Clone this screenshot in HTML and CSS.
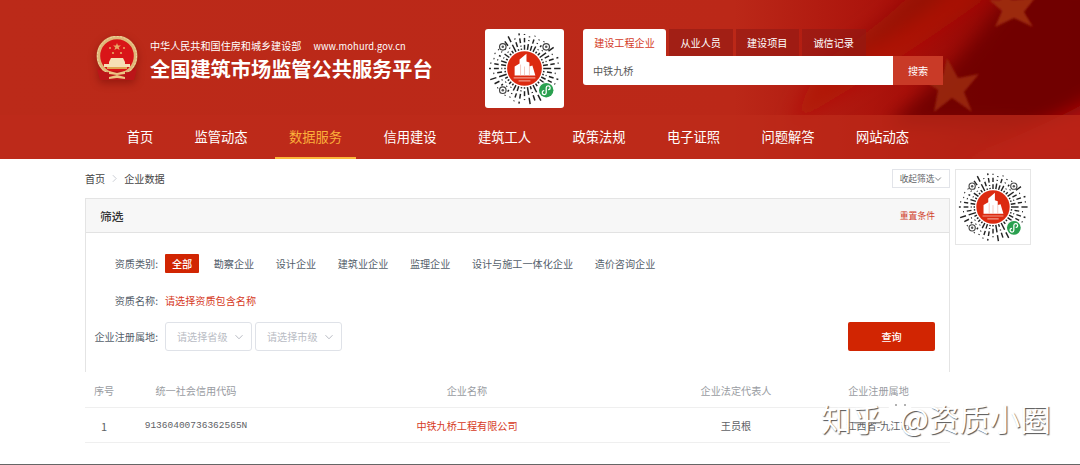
FILE: index.html
```
<!DOCTYPE html>
<html lang="zh-CN">
<head>
  <meta charset="UTF-8">
  <meta name="viewport" content="width=device-width, initial-scale=1.0">
  <title>全国建筑市场监管公共服务平台</title>
  <link rel="stylesheet" href="styles.css">
</head>
<body>
  <svg width="0" height="0" class="defs">
    <symbol id="qr" viewBox="0 0 76 76">
      <g id="rays" stroke="#222"></g>
      <g fill="#fff" stroke="#444" stroke-width="1.2">
        <circle cx="16" cy="16" r="3.3"/><circle cx="60" cy="16" r="3.3"/><circle cx="16" cy="60" r="3.3"/>
      </g>
      <g fill="#555"><circle cx="16" cy="16" r="1.3"/><circle cx="60" cy="16" r="1.3"/><circle cx="16" cy="60" r="1.3"/></g>
      <circle cx="38" cy="38" r="17.6" fill="#dc2a10"/>
      <path d="M28 45v-9l5-3v-4l7-6v8l3 1v4l3-1 3 10z" fill="#fff"/>
      <path d="M34 45v-11M38 45v-9M43 45v-9" stroke="#efb0a4" stroke-width=".7"/>
      <path d="M27 47.5h22M32 50.5h12" stroke="#f09a8a" stroke-width="1.2"/>
      <circle cx="60" cy="60" r="8.4" fill="#fff"/>
      <circle cx="60" cy="60" r="7.3" fill="#2aa04f"/>
      <path d="M57.500 60.500a2 2 0 1 0 2.500 2v-5a2 2 0 1 1 2.500 2" fill="none" stroke="#fff" stroke-width="1.3" stroke-linecap="round"/>
    </symbol>
    <symbol id="down" viewBox="0 0 10 10">
      <path d="M1.5 3.2L5 6.8l3.500-3.600" fill="none" stroke="currentColor" stroke-width="1"/>
    </symbol>
  </svg>

  <header class="header">
    <svg class="flag" viewBox="0 0 1080 159" preserveAspectRatio="none">
      <defs>
        <linearGradient id="base" x1="0" x2="1" y1="0" y2="0">
          <stop offset="0" stop-color="#bb2a19"/>
          <stop offset=".68" stop-color="#bb2818"/>
          <stop offset=".84" stop-color="#a80f09"/>
          <stop offset="1" stop-color="#7c0100"/>
        </linearGradient>
        <filter id="soft" x="-30%" y="-30%" width="160%" height="160%"><feGaussianBlur stdDeviation="9"/></filter>
        <filter id="edge"><feGaussianBlur stdDeviation=".8"/></filter>
      </defs>
      <rect width="1080" height="159" fill="url(#base)"/>
      <g filter="url(#soft)">
        <path d="M815 65Q870 35 920-15h35Q910 35 850 62z" fill="#8a0c07" opacity=".6"/>
        <path d="M790 125Q900 62 1005-15h-50Q910 35 820 65z" fill="#b00c08" opacity=".6"/>
        <path d="M890 122Q965 60 1020-20h100V125H890z" fill="#700000" opacity=".95"/>
        <path d="M940 165Q1030 135 1100 95V170z" fill="#cc1610" opacity=".65"/>
      </g>
      <g fill="#9c2a10" filter="url(#edge)">
        <path d="M947 58l11 20 21-4-15 18 8 20-20-14-18 14 4-22-17-11 22-4z" opacity=".85"/>
        <path d="M1003-15l8 15 24-2-11 14 9 15-19-9-19 9 7-16-13-11h12z"/>
      </g>
    </svg>

    <div class="top">
      <svg class="emblem" viewBox="0 0 42 44">
        <path d="M3 32l10 1h16l10-1-2 11H5z" fill="#b80f13"/>
        <circle cx="21" cy="20" r="18.6" fill="#d91518" stroke="#dfb778" stroke-width="3.6"/>
        <circle cx="21" cy="20" r="19.5" fill="none" stroke="#f0d9a3" stroke-width="1" stroke-dasharray="2 1.5"/>
        <path d="M21 7l1 2.500h3l-2.300 1.800.9 2.700-2.600-1.600-2.600 1.600.9-2.700L17 9.500h3z" fill="#e8a765"/>
        <g fill="#e8a765"><circle cx="14" cy="12" r="1"/><circle cx="28" cy="12" r="1"/><circle cx="17" cy="17" r="1.1"/><circle cx="25" cy="17" r="1.1"/></g>
        <path d="M15 22h12l2 4v2h5v3H8v-3h5v-2z" fill="#f6dfb5"/>
        <path d="M11 31h20v2H11z" fill="#e0a553"/>
        <path d="M1 33q10 5 16 2h8q8 3 16-2l-3 11H4z" fill="#bb1519"/>
        <path d="M13 35l8 2 8-2v3l-8 1-8-1zM13 41l8-2 8 2v2l-8-1-8 1z" fill="#edc583"/>
      </svg>
      <div class="brand">
        <p class="ministry">中华人民共和国住房和城乡建设部<span class="url">www.mohurd.gov.cn</span></p>
        <h1>全国建筑市场监管公共服务平台</h1>
      </div>
      <div class="qr-card"><svg><use href="#qr"/></svg></div>
      <div class="search">
        <div class="tabs">
          <span class="tab active">建设工程企业</span>
          <span class="tab">从业人员</span>
          <span class="tab">建设项目</span>
          <span class="tab">诚信记录</span>
        </div>
        <div class="search-row">
          <div class="search-input">中铁九桥</div>
          <div class="search-btn">搜索</div>
        </div>
      </div>
    </div>

    <nav class="nav">
      <a>首页</a>
      <a>监管动态</a>
      <a class="active">数据服务</a>
      <a>信用建设</a>
      <a>建筑工人</a>
      <a>政策法规</a>
      <a>电子证照</a>
      <a>问题解答</a>
      <a>网站动态</a>
    </nav>
  </header>

  <main class="main">
    <div class="content">
      <div class="crumb-row">
        <div class="crumbs">
          <span>首页</span>
          <svg viewBox="0 0 6 10"><path d="M1 1l4 4-4 4" fill="none" stroke="#c0c4cc"/></svg>
          <span>企业数据</span>
        </div>
        <div class="toggle">收起筛选<svg><use href="#down"/></svg></div>
      </div>

      <section class="panel">
        <div class="panel-head"><h2>筛选</h2><a>重置条件</a></div>
        <div class="filters">
          <div class="filter types">
            <span class="label">资质类别:</span>
            <span class="option active">全部</span>
            <span class="option">勘察企业</span>
            <span class="option">设计企业</span>
            <span class="option">建筑业企业</span>
            <span class="option">监理企业</span>
            <span class="option">设计与施工一体化企业</span>
            <span class="option">造价咨询企业</span>
          </div>
          <div class="filter names">
            <span class="label">资质名称:</span>
            <a>请选择资质包含名称</a>
          </div>
          <div class="filter region">
            <span class="label">企业注册属地:</span>
            <div class="select">请选择省级<svg><use href="#down"/></svg></div>
            <div class="select">请选择市级<svg><use href="#down"/></svg></div>
            <div class="query">查询</div>
          </div>
        </div>
      </section>

      <table class="list">
        <colgroup><col class="c-no"><col class="c-code"><col class="c-name"><col class="c-person"><col></colgroup>
        <thead>
          <tr><th>序号</th><th>统一社会信用代码</th><th>企业名称</th><th>企业法定代表人</th><th>企业注册属地</th></tr>
        </thead>
        <tbody>
          <tr><td class="no">1</td><td class="code">91360400736362565N</td><td class="company">中铁九桥工程有限公司</td><td>王员根</td><td>江西省-九江市</td></tr>
        </tbody>
      </table>
    </div>
    <aside class="qr-side"><svg><use href="#qr"/></svg></aside>
  </main>

  <div class="watermark">
    <svg class="bubbles" viewBox="0 0 36 30"><ellipse cx="14" cy="12" rx="12" ry="10"/><ellipse cx="24" cy="19" rx="10" ry="8"/><g class="eyes"><circle cx="10" cy="6" r="1"/><circle cx="19" cy="6" r="1"/></g></svg>
    <span>知乎</span><span>@资质小圈</span>
  </div>

  <script src="script.js"></script>
</body>
</html>
```
FILE: styles.css
```
* {
  box-sizing: border-box;
}
body {
  margin: 0;
  height: 465px;
  overflow: hidden;
  position: relative;
  background: #fff;
  border-bottom: 1px solid #666;
  font-family: "Noto Sans CJK SC", sans-serif;
  font-size: 10.15px;
  color: #606266;
}
h1, h2, p {
  margin: 0;
}
.defs {
  position: absolute;
}

/* header */
.header {
  position: relative;
  height: 159px;
  color: #fff;
}
.flag {
  position: absolute;
  inset: 0;
  width: 100%;
  height: 100%;
}
.top {
  position: relative;
  display: flex;
  align-items: flex-start;
  height: 115px;
  padding: 29px 0 0 96px;
}
.emblem {
  width: 42px;
  height: 44px;
  margin: 7px 12px 0 0;
  filter: drop-shadow(0 3px 4px rgba(90, 0, 0, 0.4));
}
.brand {
  width: 335px;
  padding-top: 9px;
  white-space: nowrap;
}
.ministry {
  font-size: 10.1px;
  line-height: 16px;
}
.url {
  margin-left: 12px;
  font-size: 9.3px;
  letter-spacing: 0.15px;
}
h1 {
  font-size: 20.2px;
  line-height: 30px;
  font-weight: 700;
}
.qr-card {
  width: 79px;
  height: 79px;
  padding: 2px;
  margin-right: 19px;
  background: #fff;
  border-radius: 3px;
}
.qr-card svg {
  display: block;
  width: 75px;
  height: 75px;
}
.search {
  width: 360px;
}
.tabs {
  display: flex;
  gap: 3px;
}
.tab {
  width: 63.5px;
  height: 27px;
  line-height: 28px;
  text-align: center;
  background: rgba(145, 25, 20, 0.6);
}
.tab.active {
  width: 83px;
  background: #fff;
  color: #d43b27;
  border-radius: 3px 3px 0 0;
}
.search-row {
  display: flex;
  height: 29px;
  line-height: 29px;
}
.search-input {
  width: 310px;
  padding-left: 10px;
  background: #fff;
  color: #555;
  border-radius: 0 0 0 3px;
}
.search-btn {
  width: 50px;
  text-align: center;
  background: #c93a27;
}
.nav {
  position: relative;
  display: flex;
  gap: 13.5px;
  height: 44px;
  padding-left: 113px;
  background: rgba(190, 43, 26, 0.72);
}
.nav a {
  height: 44px;
  line-height: 44px;
  width: 81px;
  font-size: 13.3px;
  text-align: center;
  white-space: nowrap;
}
.nav a:first-child {
  width: 54px;
}
.nav .active {
  color: #fbb03b;
  border-bottom: 2px solid #fcb83a;
}

/* content */
.main {
  display: grid;
  grid-template-columns: 865px 76px;
  gap: 5px;
  padding: 10px 0 0 85px;
}
.crumb-row {
  display: flex;
  justify-content: space-between;
  height: 29px;
}
.crumbs {
  display: flex;
  align-items: center;
  height: 19px;
  color: #444;
}
.crumbs svg {
  width: 5px;
  height: 9px;
  margin: 0 7px;
}
.toggle {
  display: flex;
  align-items: center;
  justify-content: center;
  width: 58px;
  height: 19px;
  border: 1px solid #e2e4e9;
  font-size: 8.7px;
}
.toggle svg {
  width: 8px;
  height: 8px;
}
.panel {
  height: 174px;
  border: 1px solid #e4e4e4;
  border-bottom: none;
}
.panel-head {
  display: flex;
  justify-content: space-between;
  align-items: center;
  height: 34px;
  padding: 0 14px;
  background: #f7f7f7;
  border-bottom: 1px solid #e2e2e2;
}
.panel-head a {
  font-size: 8.8px;
  color: #d0402c;
}
h2 {
  font-size: 11.8px;
  font-weight: 500;
  color: #333;
}
.filters {
  padding-top: 21px;
  color: #54606b;
}
.filter {
  display: flex;
  align-items: center;
}
.label {
  width: 72px;
  margin-right: 7px;
  text-align: right;
  white-space: nowrap;
}
.types {
  height: 19px;
}
.option {
  height: 19px;
  line-height: 19px;
  padding: 0 7px;
  margin-right: 7.5px;
}
.option.active {
  background: #d12502;
  color: #fff;
  font-weight: 500;
  border-radius: 1px;
}
.names {
  height: 18px;
  margin-top: 18px;
}
.names a {
  color: #d63a24;
}
.region {
  height: 29px;
  margin-top: 13px;
}
.select {
  display: flex;
  align-items: center;
  justify-content: space-between;
  width: 87px;
  height: 29px;
  margin-right: 3px;
  padding: 0 7px 0 11px;
  border: 1px solid #dfe2e8;
  border-radius: 3px;
  color: #b9bcc4;
}
.select svg {
  width: 10px;
  height: 10px;
}
.query {
  width: 87px;
  height: 29px;
  line-height: 29px;
  margin: 0 14px 0 auto;
  border-radius: 2px;
  background: #d12502;
  color: #fff;
  font-weight: 500;
  text-align: center;
}

/* table */
.list {
  width: 865px;
  table-layout: fixed;
  border-collapse: collapse;
  text-align: center;
}
.c-no {
  width: 38px;
}
.c-code {
  width: 146px;
}
.c-name {
  width: 396px;
}
.c-person {
  width: 142px;
}
.list th, .list td {
  height: 35px;
  padding: 2px 0 0;
  border-bottom: 1px solid #efefef;
  white-space: nowrap;
}
.list th {
  color: #999ca2;
  font-weight: 400;
}
.list .no {
  font-size: 11px;
}
.list .code {
  font-family: "Liberation Mono", monospace;
  font-size: 9.5px;
}
.list .company {
  color: #d63a24;
}
.qr-side {
  width: 76px;
  height: 76px;
  padding: 1px;
  border: 1px solid #e6e6e6;
}
.qr-side svg {
  display: block;
  width: 72px;
  height: 72px;
}

/* overlay mark in the corner */
.watermark {
  position: absolute;
  left: 821px;
  top: 398px;
  display: flex;
  gap: 18px;
  font-size: 30.5px;
  line-height: 40px;
  color: #fff;
  text-shadow: 1px 1px 1px #555;
  white-space: nowrap;
}
.bubbles {
  position: absolute;
  left: 65px;
  top: 1px;
  width: 36px;
  height: 30px;
  fill: #fff;
}
.bubbles .eyes {
  fill: #999;
}
.watermark span {
  position: relative;
}
```
FILE: script.js
```
// rays of the round mini-program code: [from, to] dashes, measured from the centre
const rays = document.getElementById("rays");
const patterns = [
  [[19, 27], [30, 36.5]],
  [[19, 21], [23, 24], [27, 29], [33, 34]],
  [[19, 24], [26.5, 31], [34, 35]],
  [[19, 20.5], [23, 28], [31, 32]],
  [[19, 22], [25, 26], [28.5, 34]],
  [[19, 25], [28, 29], [32, 33]],
  [[19, 20.5], [22.5, 23.5], [26, 31], [34, 36]]
];
const count = 40;

for (let i = 0; i < count; i++) {
  patterns[(i * 3 + (i >> 3)) % patterns.length].forEach(([from, to]) => {
    const line = document.createElementNS("http://www.w3.org/2000/svg", "line");
    line.setAttribute("x1", 38 + from);
    line.setAttribute("x2", 38 + to);
    line.setAttribute("y1", 38);
    line.setAttribute("y2", 38);
    line.setAttribute("stroke-width", 1.5);
    line.setAttribute("transform", `rotate(${i * 360 / count} 38 38)`);
    rays.appendChild(line);
  });
}
```
